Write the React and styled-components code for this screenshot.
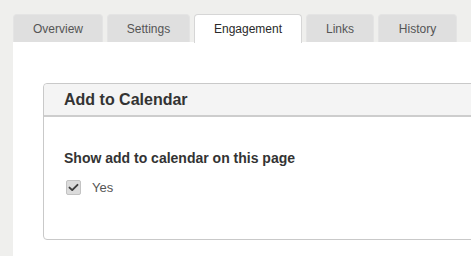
import React from "react";
import styled, { createGlobalStyle } from "styled-components";

const Global = createGlobalStyle`
  html, body { margin: 0; padding: 0; }
  body {
    background: #efefed;
    font-family: "Liberation Sans", Arial, Helvetica, sans-serif;
    overflow: hidden;
    width: 471px;
    height: 256px;
  }
`;

const Page = styled.div`
  padding: 14px 0 0 13px;
  width: 560px;
`;

const TabBar = styled.div`
  display: flex;
  gap: 4px;
  height: 28px;
`;

const Tab = styled.div`
  display: flex;
  align-items: center;
  justify-content: center;
  box-sizing: border-box;
  width: ${(p) => p.$w}px;
  height: 28px;
  font-size: 12px;
  color: ${(p) => (p.$active ? "#2a2a2a" : "#555")};
  background: ${(p) => (p.$active ? "#fff" : "#dfdfdf")};
  border: 1px solid ${(p) => (p.$active ? "#d6d6d6" : "#e4e4e4")};
  border-bottom: none;
  border-radius: 4px 4px 0 0;
  ${(p) => p.$active && "height: 29px; margin-bottom: -1px; position: relative; z-index: 1;"}
`;

const Content = styled.div`
  background: #fff;
  padding: 41px 0 40px 30px;
  min-height: 200px;
`;

const Panel = styled.div`
  border: 1px solid #c9c9c9;
  border-radius: 4px;
  background: #fff;
`;

const PanelHeader = styled.div`
  display: flex;
  align-items: center;
  height: 31px;
  padding-left: 20px;
  background: #f4f4f4;
  border-bottom: 2px solid #cdcdcd;
  border-radius: 4px 4px 0 0;
  font-size: 16px;
  font-weight: bold;
  color: #333;
`;

const PanelBody = styled.div`
  padding: 33px 20px 44px 20px;
`;

const Label = styled.div`
  font-size: 14px;
  line-height: 17px;
  font-weight: bold;
  color: #333;
`;

const CheckRow = styled.label`
  display: flex;
  align-items: center;
  gap: 11px;
  margin-top: 13px;
  margin-left: 2px;
  font-size: 13px;
  color: #555;
  height: 15px;
`;

const Box = styled.span`
  box-sizing: border-box;
  width: 15px;
  height: 15px;
  background: #dcdcdc;
  border: 1px solid #c3c3c3;
  border-radius: 2px;
  display: flex;
  align-items: center;
  justify-content: center;
`;

const tabs = [
  { name: "Overview", w: 90 },
  { name: "Settings", w: 83 },
  { name: "Engagement", w: 108, active: true },
  { name: "Links", w: 68 },
  { name: "History", w: 79 },
];

export default function App() {
  return (
    <>
      <Global />
      <Page>
        <TabBar>
          {tabs.map((t) => (
            <Tab key={t.name} $active={t.active} $w={t.w}>
              {t.name}
            </Tab>
          ))}
        </TabBar>
        <Content>
          <Panel>
            <PanelHeader>Add to Calendar</PanelHeader>
            <PanelBody>
              <Label>Show add to calendar on this page</Label>
              <CheckRow>
                <Box>
                  <svg width="11" height="9" viewBox="0 0 11 9">
                    <path
                      d="M1.5 4.6 L4.2 7.1 L9.5 1.8"
                      fill="none"
                      stroke="#3d3d3d"
                      strokeWidth="1.9"
                      strokeLinecap="round"
                      strokeLinejoin="round"
                    />
                  </svg>
                </Box>
                Yes
              </CheckRow>
            </PanelBody>
          </Panel>
        </Content>
      </Page>
    </>
  );
}
